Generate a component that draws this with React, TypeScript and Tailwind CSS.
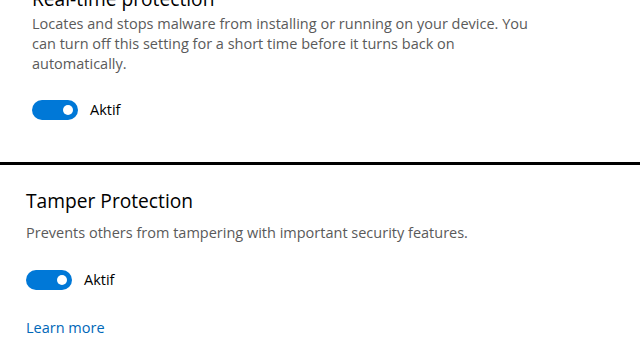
import React from 'react';

const font = { fontFamily: '"Open Sans", "Noto Sans", sans-serif' };

function Toggle() {
  return (
    <div className="flex items-center gap-3">
      <div className="flex h-[20px] w-[46px] items-center justify-end rounded-full bg-[#0078d7] pr-[5px]">
        <div className="h-[10px] w-[10px] rounded-full bg-white" />
      </div>
      <span className="text-[14.5px] text-[#000]">Aktif</span>
    </div>
  );
}

export default function App() {
  return (
    <div className="h-[360px] w-[640px] overflow-hidden bg-white" style={font}>
      {/* Real-time protection */}
      <section className="-mt-[15px] h-[177px] pl-[32px]">
        <h2 className="text-[19.2px] leading-[28px] text-black">Real-time protection</h2>
        <p className="mt-[1px] w-[500px] text-[14.5px] leading-[20px] text-[#5a5a5a]">
          Locates and stops malware from installing or running on your device. You can turn off this setting for a short time before it turns back on automatically.
        </p>
        <div className="mt-[25px]">
          <Toggle />
        </div>
      </section>

      <div className="h-[3px] w-full bg-black" />

      {/* Tamper Protection */}
      <section className="pl-[26px] pt-[22px]">
        <h2 className="text-[19.2px] leading-[28px] text-black">Tamper Protection</h2>
        <p className="mt-[8px] text-[14.5px] leading-[20px] text-[#5a5a5a]">
          Prevents others from tampering with important security features.
        </p>
        <div className="mt-[26px]">
          <Toggle />
        </div>
        <a className="mt-[27px] block text-[14.5px] leading-[20px] text-[#0067b8]">Learn more</a>
      </section>
    </div>
  );
}
